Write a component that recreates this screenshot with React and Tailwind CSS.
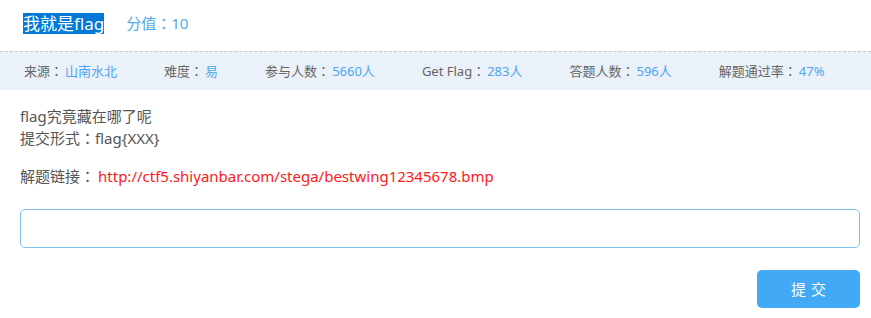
const Colon = () => (
  <span style={{ fontFamily: '"Noto Sans CJK TC", sans-serif' }}>：</span>
);

export default function App() {
  const stats = [
    { label: "来源", value: "山南水北" },
    { label: "难度", value: "易" },
    { label: "参与人数", value: "5660人" },
    { label: "Get Flag", value: "283人" },
    { label: "答题人数", value: "596人" },
    { label: "解题通过率", value: "47%" },
  ];

  return (
    <div
      className="w-[871px] h-[318px] bg-white overflow-hidden"
      style={{ fontFamily: '"Noto Sans", "Noto Sans CJK SC", sans-serif' }}
    >
      {/* title */}
      <div className="h-[51px] flex items-center pl-[23px] pb-[4px]">
        <span className="bg-[#0078d7] text-white text-[17px] leading-[21px]">我就是flag</span>
        <span className="ml-[22px] text-[15px] text-[#51a8f0]">
          分值<Colon />10
        </span>
      </div>

      {/* stats bar */}
      <div className="h-[39px] bg-[#eaf1f8] border-t border-dashed border-[#c8c8c8] flex items-center pl-[24px] text-[13px] text-[#666]">
        {stats.map((s) => (
          <span key={s.label} className="mr-[47px] whitespace-nowrap">
            {s.label}
            <Colon />
            <span className="ml-[2px] text-[#4da6ef]">{s.value}</span>
          </span>
        ))}
      </div>

      {/* body */}
      <div className="w-[840px] ml-[20px] pt-[16px] text-[15px] text-[#555]">
        <p className="leading-[21px]">flag究竟藏在哪了呢</p>
        <p className="leading-[21px]">
          提交形式<Colon />flag{"{XXX}"}
        </p>
        <p className="leading-[21px] mt-[16px]">
          解题链接<Colon />
          <a className="ml-[3px] text-[#ff1a1a]">http://ctf5.shiyanbar.com/stega/bestwing12345678.bmp</a>
        </p>

        <input
          type="text"
          className="mt-[22px] block w-[840px] h-[39px] rounded-[5px] border border-[#80c4f5] outline-none px-2"
        />

        <div className="flex justify-end mt-[22px]">
          <button className="w-[103px] h-[38px] rounded-[5px] bg-[#42a9f5] text-white text-[15px] tracking-[5px] pl-[5px]">
            提交
          </button>
        </div>
      </div>
    </div>
  );
}
